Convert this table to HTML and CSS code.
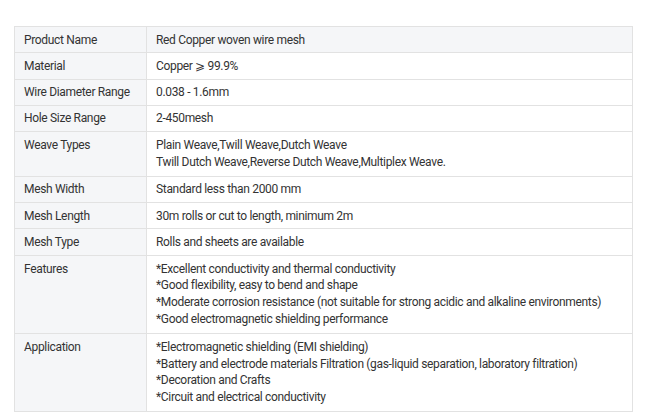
FILE: index.html
```html
<!DOCTYPE html>
<html lang="en">
<head>
    <meta charset="UTF-8">
    <meta name="viewport" content="width=device-width, initial-scale=1.0">
    <title>Red Copper woven wire mesh</title>
    <link rel="stylesheet" href="styles.css">
</head>
<body>
    <div class="spec-wrap">
        <table class="spec-table">
            <tr class="head-row">
                <td class="label">Product Name</td>
                <td>Red Copper woven wire mesh</td>
            </tr>
            <tr>
                <td class="label">Material</td>
                <td>Copper ⩾ 99.9%</td>
            </tr>
            <tr>
                <td class="label">Wire Diameter Range</td>
                <td>0.038 - 1.6mm</td>
            </tr>
            <tr>
                <td class="label">Hole Size Range</td>
                <td>2-450mesh</td>
            </tr>
            <tr class="multi">
                <td class="label">Weave Types</td>
                <td>Plain Weave,Twill Weave,Dutch Weave<br>Twill Dutch Weave,Reverse Dutch Weave,Multiplex Weave.</td>
            </tr>
            <tr>
                <td class="label">Mesh Width</td>
                <td>Standard less than 2000 mm</td>
            </tr>
            <tr>
                <td class="label">Mesh Length</td>
                <td>30m rolls or cut to length, minimum 2m</td>
            </tr>
            <tr>
                <td class="label">Mesh Type</td>
                <td>Rolls and sheets are available</td>
            </tr>
            <tr class="multi">
                <td class="label">Features</td>
                <td>*Excellent conductivity and thermal conductivity<br>*Good flexibility, easy to bend and shape<br>*Moderate corrosion resistance (not suitable for strong acidic and alkaline environments)<br>*Good electromagnetic shielding performance</td>
            </tr>
            <tr class="multi">
                <td class="label">Application</td>
                <td>*Electromagnetic shielding (EMI shielding)<br>*Battery and electrode materials Filtration (gas-liquid separation, laboratory filtration)<br>*Decoration and Crafts<br>*Circuit and electrical conductivity</td>
            </tr>
        </table>
    </div>
</body>
</html>
```

FILE: styles.css
```css
body {
    margin: 0;
    background: #fff;
    font-family: Roboto, "Liberation Sans", Arial, sans-serif;
    font-size: 12px;
    letter-spacing: -0.33px;
    color: #333;
}
.spec-wrap {
    padding: 26px 17px 0 14px;
}
.spec-table {
    width: 100%;
    border-collapse: collapse;
    border: 1px solid #e2e2e2;
}
.spec-table td {
    border: 1px solid #e2e2e2;
    padding: 4.5px 8px 4px 9px;
    line-height: 16.8px;
    vertical-align: top;
    text-align: left;
}
.spec-table .multi td {
    padding-top: 5px;
    padding-bottom: 5px;
}
.spec-table td.label {
    width: 114px;
    background: #f5f6f8;
}
.head-row td {
    background: #f5f6f8;
}
```
